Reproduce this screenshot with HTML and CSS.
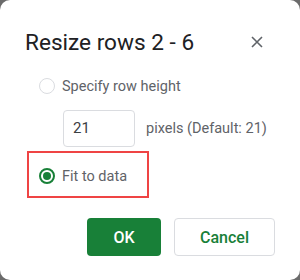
FILE: index.html
```html
<!DOCTYPE html>
<html lang="en">
<head>
    <meta charset="UTF-8">
    <title>Resize rows</title>
    <link rel="stylesheet" href="styles.css">
</head>
<body>
    <div class="dialog">
        <div class="header">
            <span class="title">Resize rows 2 - 6</span>
            <span class="close">
                <svg width="12" height="12" viewBox="0 0 12 12">
                    <path d="M1 1L11 11M11 1L1 11" stroke="#5f6368" stroke-width="1.6" fill="none"/>
                </svg>
            </span>
        </div>

        <div class="option">
            <span class="radio"></span>
            <span class="label">Specify row height</span>
        </div>

        <div class="height-row">
            <div class="input">21</div>
            <span class="label">pixels (Default: 21)</span>
        </div>

        <div class="highlight">
            <div class="option">
                <span class="radio checked"></span>
                <span class="label">Fit to data</span>
            </div>
        </div>

        <div class="buttons">
            <button class="ok">OK</button>
            <button class="cancel">Cancel</button>
        </div>
    </div>
</body>
</html>
```

FILE: styles.css
```css
body {
    margin: 0;
    background: #6b6b6b;
    font-family: Roboto, 'Noto Sans', sans-serif;
}
.dialog {
    width: 300px;
    height: 280px;
    box-sizing: border-box;
    background: #fff;
    border-radius: 10px;
    padding: 24px 25px 0 25px;
}
.header {
    display: flex;
    justify-content: space-between;
    align-items: center;
    height: 36px;
}
.title {
    font-size: 22.6px;
    color: #202124;
}
.close {
    display: flex;
    margin-right: 12px;
    margin-top: -1px;
}
.option {
    display: flex;
    align-items: center;
    height: 24px;
    margin-left: 14px;
    margin-top: 14px;
}
.radio {
    width: 16px;
    height: 16px;
    box-sizing: border-box;
    border: 1.5px solid #dadce0;
    border-radius: 50%;
    margin-right: 7px;
    position: relative;
}
.radio.checked {
    border: 2px solid #188038;
}
.radio.checked::after {
    content: "";
    position: absolute;
    left: 2px;
    top: 2px;
    width: 8px;
    height: 8px;
    border-radius: 50%;
    background: #188038;
}
.label {
    font-size: 14.5px;
    color: #5f6368;
}
.height-row {
    display: flex;
    align-items: center;
    margin-left: 38px;
    margin-top: 12px;
}
.input {
    width: 72px;
    height: 37px;
    box-sizing: border-box;
    border: 1px solid #dadce0;
    border-radius: 4px;
    padding-left: 9px;
    line-height: 35px;
    font-size: 15px;
    color: #3c4043;
    margin-right: 11px;
}
.highlight {
    width: 122px;
    height: 47px;
    box-sizing: border-box;
    border: 2px solid #ef4444;
    margin-left: 2px;
    margin-top: 4px;
    padding-left: 10px;
    display: flex;
    align-items: center;
}
.highlight .option {
    margin: 3px 0 0 0;
}
.buttons {
    display: flex;
    justify-content: flex-end;
    gap: 13px;
    margin-top: 20px;
}
button {
    height: 38px;
    border-radius: 4px;
    font-family: Roboto, 'Noto Sans', sans-serif;
    font-size: 16px;
    font-weight: 500;
    cursor: pointer;
}
.ok {
    width: 74px;
    background: #188038;
    color: #fff;
    border: none;
}
.cancel {
    width: 101px;
    background: #fff;
    color: #188038;
    border: 1px solid #dadce0;
}
```
